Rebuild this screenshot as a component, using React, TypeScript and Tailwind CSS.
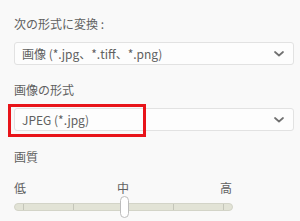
import React from 'react';

const font = { fontFamily: '"Noto Sans CJK JP", "Noto Sans", sans-serif' };

const Chevron = () => (
    <svg width="10" height="6" viewBox="0 0 10 6" className="shrink-0">
        <path d="M1 1l4 3.5L9 1" fill="none" stroke="#707070" strokeWidth="1.7" strokeLinecap="round" strokeLinejoin="round" />
    </svg>
);

const Select: React.FC<{ value: string; children?: React.ReactNode }> = ({ value, children }) => (
    <div className="relative h-[23px] w-[280px] rounded-[3px] border border-[#e2e2e2] bg-[#fdfdfd] flex items-center justify-between pl-[7px] pr-[9px]">
        <span className="text-[12px] leading-none text-[#606060]">{value}</span>
        <Chevron />
        {children}
    </div>
);

export default function App() {
    return (
        <div className="w-[300px] h-[221px] bg-[#f9f9f9] pl-[14px] pt-[16px] flex flex-col overflow-hidden" style={font}>
            <p className="text-[12px] leading-[16px] text-[#606060]">次の形式に変換 :</p>
            <div className="mt-[10px]">
                <Select value="画像 (*.jpg、*.tiff、*.png)" />
            </div>
            <p className="mt-[17px] text-[12px] leading-[16px] text-[#606060]">画像の形式</p>
            <div className="mt-[10px]">
                <Select value="JPEG (*.jpg)">
                    <div className="absolute left-[-7px] top-[-5px] w-[138px] h-[33px] border-[3px] border-[#e8141a]" />
                </Select>
            </div>
            <p className="mt-[18px] text-[12px] leading-[16px] text-[#606060]">画質</p>
            <div className="mt-[15px] w-[218px] flex justify-between text-[12px] leading-[16px] text-[#606060]">
                <span>低</span>
                <span>中</span>
                <span>高</span>
            </div>
            <div className="relative mt-[7px] w-[219px] h-[8px] rounded-full bg-[#e2e3d6] border border-[#d3d4c8]">
                {[9, 59, 159, 209].map((x) => (
                    <div key={x} className="absolute top-0 bottom-0 w-px bg-[#c4c5b9]" style={{ left: x - 1 }} />
                ))}
                <div className="absolute left-[105px] top-[-8px] w-[9px] h-[22px] rounded-full bg-white border border-[#bdbdbd]" />
            </div>
        </div>
    );
}
